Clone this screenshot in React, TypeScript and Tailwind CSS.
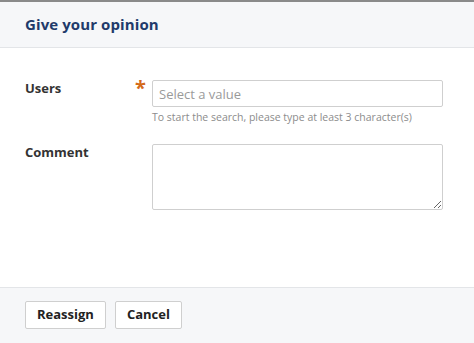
import React from "react";

export default function App() {
  return (
    <div
      className="w-[474px] h-[343px] flex flex-col bg-white border-t-2 border-[#8a8a8a] overflow-hidden"
      style={{ fontFamily: '"Open Sans", "Liberation Sans", sans-serif' }}
    >
      <div className="h-[46px] flex items-center px-[25px] bg-[#f6f7f9] border-b border-[#e3e5e8]">
        <h1 className="text-[15px] font-bold text-[#213a6a] tracking-[0.1px]">Give your opinion</h1>
      </div>
      <div className="flex-1 flex flex-col pt-[32px] px-[25px] gap-[20px]">
        <div className="flex">
          <label className="w-[110px] text-[13px] font-bold text-[#333] leading-[14px] pt-[1px]">Users</label>
          <span className="w-[17px] text-[#d46a1a] text-[20px] leading-[16px] font-bold">*</span>
          <div className="flex flex-col">
            <input
              placeholder="Select a value"
              className="w-[291px] h-[27px] border border-[#cfcfcf] rounded-[2px] px-[6px] text-[13px] text-[#333] placeholder:text-[#9a9a9a] outline-none"
            />
            <span className="mt-[4px] text-[10.5px] text-[#8c8c8c] leading-[13px]">
              To start the search, please type at least 3 character(s)
            </span>
          </div>
        </div>
        <div className="flex">
          <label className="w-[127px] text-[13px] font-bold text-[#333] leading-[14px] pt-[1px]">Comment</label>
          <textarea className="w-[291px] h-[66px] border border-[#cfcfcf] rounded-[2px] px-[6px] text-[13px] outline-none" />
        </div>
      </div>
      <div className="h-[56px] bg-[#f6f7f9] border-t border-[#e3e5e8] flex items-start pt-[13px] px-[25px] gap-[9px]">
        <button className="h-[28px] px-[11px] bg-white border border-[#cfcfcf] rounded-[2px] text-[13px] font-bold text-[#222]">
          Reassign
        </button>
        <button className="h-[28px] px-[11px] bg-white border border-[#cfcfcf] rounded-[2px] text-[13px] font-bold text-[#222]">
          Cancel
        </button>
      </div>
    </div>
  );
}
